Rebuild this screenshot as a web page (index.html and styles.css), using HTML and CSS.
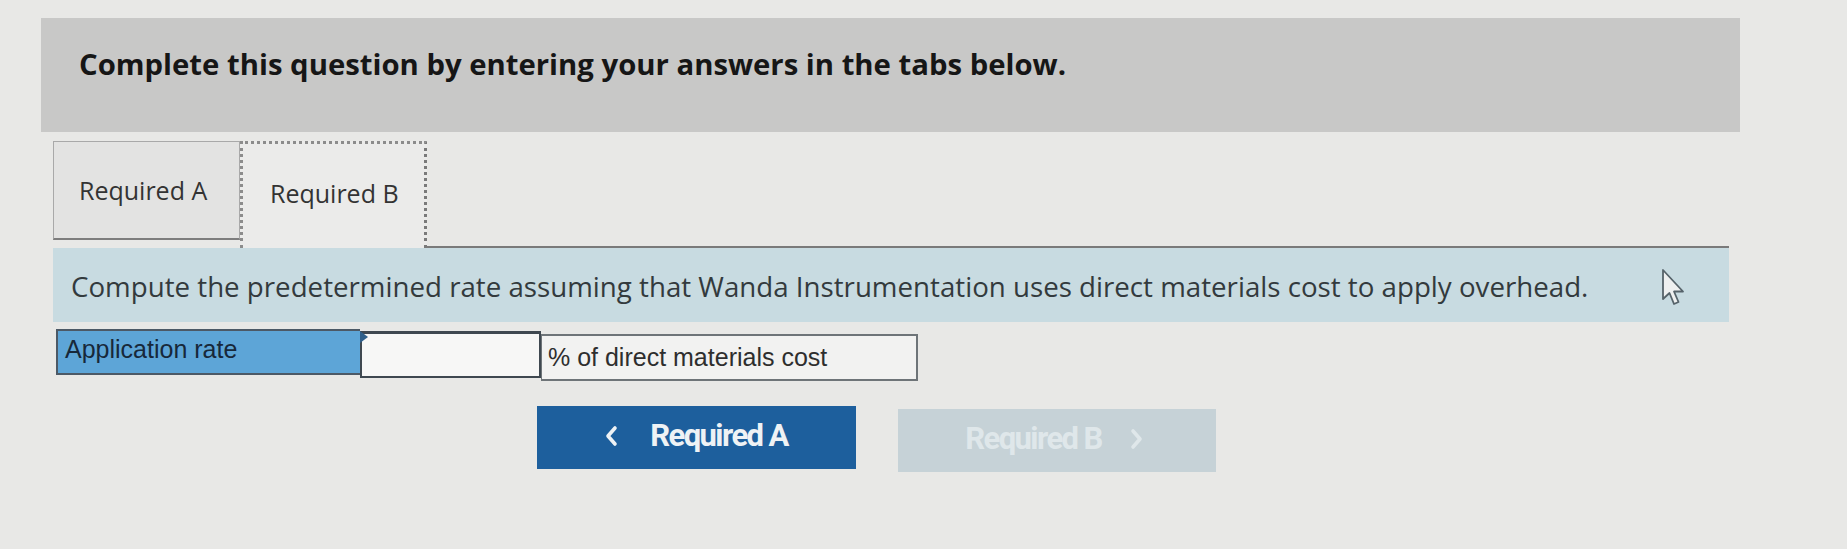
FILE: index.html
```html
<!DOCTYPE html>
<html lang="en">
<head>
<meta charset="utf-8">
<title>Required B</title>
<link rel="stylesheet" href="styles.css">
</head>
<body>
<div class="page">
  <div class="banner">Complete this question by entering your answers in the tabs below.</div>

  <div class="tabs">
    <div class="tab tab-a">Required A</div>
    <div class="tab tab-b">Required B</div>
    <div class="tab-fill"></div>
  </div>

  <div class="panel">
    <p class="prompt">Compute the predetermined rate assuming that Wanda Instrumentation uses direct materials cost to apply overhead.</p>
  </div>

  <div class="answer-row">
    <div class="cell label-cell">Application rate</div>
    <div class="cell input-cell"><span class="corner"></span></div>
    <div class="cell unit-cell">% of direct materials cost</div>
  </div>

  <div class="nav">
    <button class="btn btn-prev">
      <svg class="chev chev-l" width="13" height="22" viewBox="0 0 13 22" aria-hidden="true"><polyline points="10,3 3,11 10,19" /></svg>
      Required A
    </button>
    <button class="btn btn-next" disabled>
      Required B
      <svg class="chev chev-r" width="13" height="22" viewBox="0 0 13 22" aria-hidden="true"><polyline points="3,3 10,11 3,19" /></svg>
    </button>
  </div>
</div>

<svg class="cursor" width="26" height="42" viewBox="0 0 26 42" aria-hidden="true">
  <path d="M2 2 L2 31 L8.5 25 L13 36 L17.5 34 L13 23.5 L22 23.5 Z" fill="#eef0f0" stroke="#56636a" stroke-width="1.8" stroke-linejoin="round"/>
</svg>
</body>
</html>
```

FILE: styles.css
```css
html, body {
  margin: 0;
  padding: 0;
}

body {
  background: #e8e8e6;
  font-family: "Open Sans", "DejaVu Sans", sans-serif;
  color: #2b2b2b;
  width: 1847px;
  height: 549px;
  overflow: hidden;
  position: relative;
}

.page {
  padding: 18px 0 0 41px;
}

.banner {
  width: 1699px;
  height: 114px;
  box-sizing: border-box;
  background: #c8c8c7;
  padding: 27px 0 0 38px;
  font-size: 29.3px;
  line-height: 38px;
  font-weight: 700;
  color: #161616;
}

.tabs {
  display: flex;
  align-items: flex-start;
  width: 1676px;
  margin: 9px 0 0 12px;
}

.tab {
  box-sizing: border-box;
  display: flex;
  align-items: center;
  font-size: 25px;
  color: #333;
}

.tab-a {
  width: 187px;
  height: 99px;
  padding-left: 25px;
  background: #e3e3e2;
  border: 1px solid #a9a9a9;
  border-bottom: 2px solid #7d7d7d;
}

.tab-b {
  width: 187px;
  height: 107px;
  padding: 0 0 6px 27px;
  background: #ebebea;
  border-top: 3px dotted #8c8c8c;
  border-left: 3px dotted #8c8c8c;
  border-right: 3px dotted #7a7a7a;
}

.tab-fill {
  flex: 1;
  align-self: flex-end;
  height: 6px;
  border-bottom: 2px solid #7a7a7a;
}

.panel {
  width: 1676px;
  height: 74px;
  margin-left: 12px;
  box-sizing: border-box;
  background: #c8dbe1;
  display: flex;
  align-items: center;
  padding: 2px 0 0 18px;
}

.prompt {
  margin: 0;
  font-size: 27.7px;
  line-height: 36px;
  color: #333a3d;
}

.answer-row {
  display: flex;
  align-items: flex-start;
  margin: 7px 0 0 15px;
}

.cell {
  box-sizing: border-box;
  font-family: "Liberation Sans", Arial, sans-serif;
  font-size: 25px;
  display: flex;
  align-items: center;
}

.label-cell {
  width: 304px;
  height: 46px;
  padding: 0 0 6px 7px;
  background: #5da5d7;
  border: 2px solid #4c5966;
  border-right: none;
  color: #17283a;
}

.input-cell {
  position: relative;
  width: 181px;
  height: 47px;
  margin-top: 2px;
  background: #f7f7f6;
  border: 2px solid #3f4850;
  border-top-width: 3px;
}

.corner {
  position: absolute;
  left: -2px;
  top: -3px;
  width: 0;
  height: 0;
  border-top: 6px solid transparent;
  border-bottom: 6px solid transparent;
  border-left: 8px solid #2f5f8a;
}

.unit-cell {
  width: 377px;
  height: 47px;
  margin-top: 5px;
  padding: 0 0 0 6px;
  background: #f2f2f1;
  border: 2px solid #6e7478;
  border-left: 1px solid #6e7478;
  color: #2e2e2e;
}

.nav {
  display: flex;
  align-items: flex-start;
  gap: 42px;
  margin: 25px 0 0 496px;
}

.btn {
  box-sizing: border-box;
  height: 63px;
  border: none;
  font-family: Roboto, "Liberation Sans", sans-serif;
  font-weight: 700;
  font-size: 31px;
  letter-spacing: -1.6px;
  display: flex;
  align-items: center;
  justify-content: center;
  padding: 0 0 4px 0;
}

.btn-prev {
  width: 319px;
  background: #1d5f9d;
  color: #eef2f5;
}

.btn-next {
  width: 318px;
  margin-top: 3px;
  background: #c6d2d7;
  color: #dfe7ea;
  padding-right: 6px;
}

.chev polyline {
  fill: none;
  stroke-width: 3.6;
  stroke-linecap: round;
  stroke-linejoin: round;
}

.chev-l {
  margin-right: 32px;
}

.chev-l polyline {
  stroke: #eef2f5;
}

.chev-r {
  margin-left: 28px;
}

.chev-r polyline {
  stroke: #dfe7ea;
}

.cursor {
  position: absolute;
  left: 1661px;
  top: 268px;
}
```
